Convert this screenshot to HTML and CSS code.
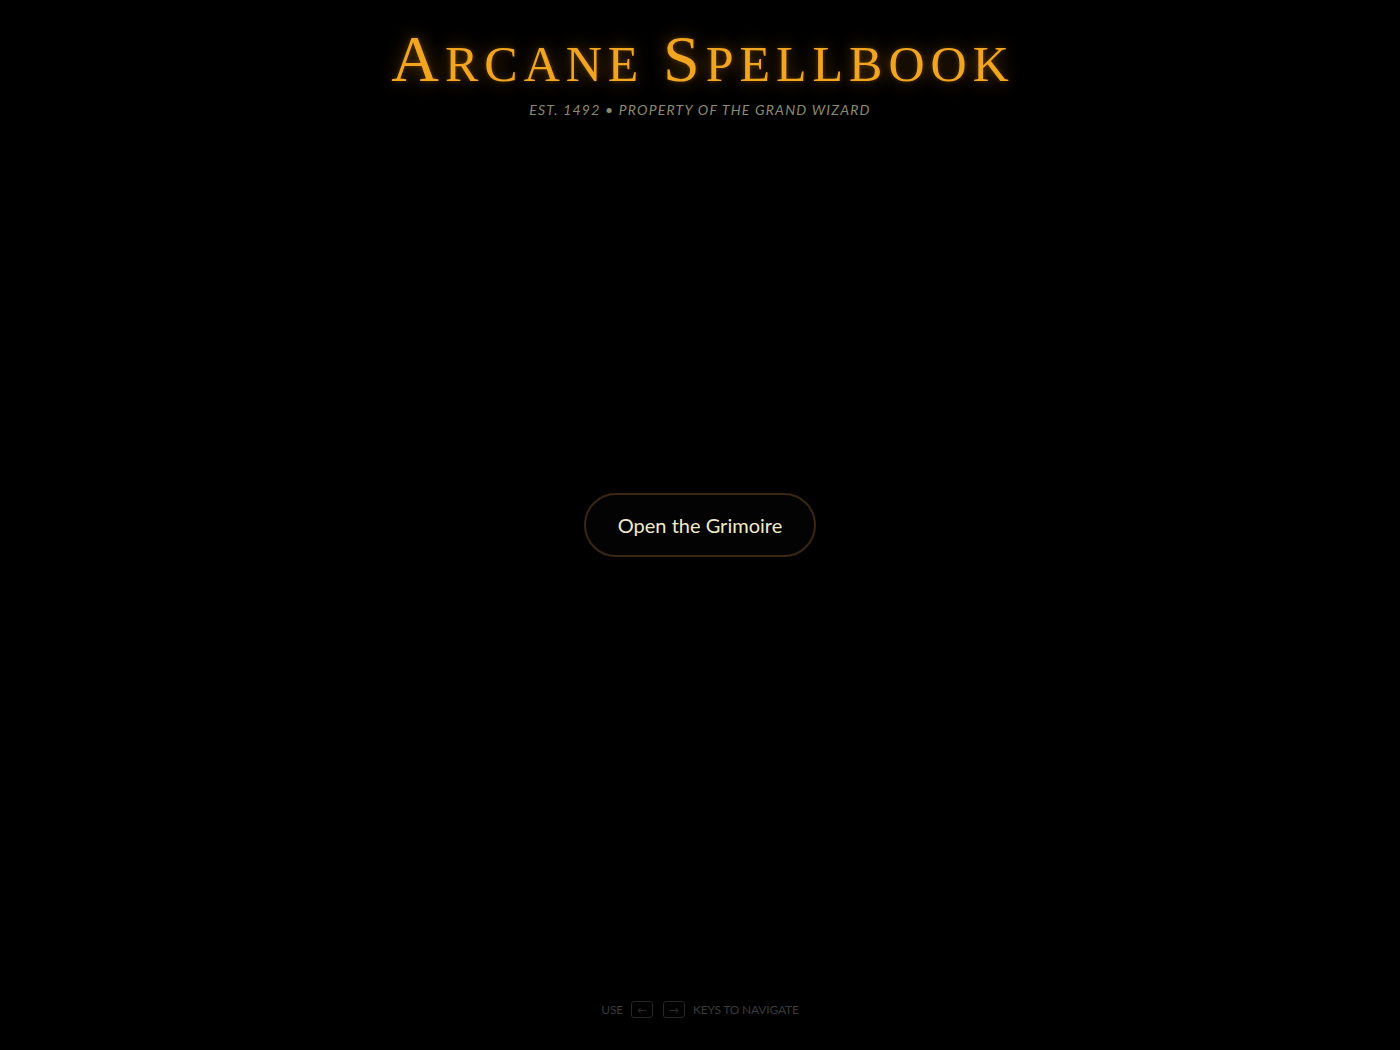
FILE: index.html
```html
<!DOCTYPE html>
<html lang="en">
<head>
<meta charset="utf-8">
<title>Arcane Spellbook</title>
<link rel="stylesheet" href="styles.css">
</head>
<body>
<div class="page">
  <header class="header">
    <h1 class="title"><span class="cap">A</span>rcane <span class="cap">S</span>pellbook</h1>
    <p class="subtitle">Est. 1492 &bull; Property of the Grand Wizard</p>
  </header>
  <main class="stage">
    <button class="open-btn" type="button">Open the Grimoire</button>
  </main>
  <footer class="hint">
    <span>Use</span>
    <span class="key">&larr;</span>
    <span class="key">&rarr;</span>
    <span>Keys to navigate</span>
  </footer>
</div>
</body>
</html>
```

FILE: styles.css
```css
html, body {
  margin: 0;
  padding: 0;
  background: #000;
  height: 100%;
}
body {
  font-family: Lato, "Open Sans", sans-serif;
  color: #e8e0c0;
}
.page {
  height: 1050px;
  display: grid;
  grid-template-rows: 1fr auto 1fr;
  justify-items: center;
}
.header {
  align-self: start;
  padding-top: 26px;
  text-align: center;
}
.title {
  margin: 0;
  font-family: "Liberation Serif", "DejaVu Serif", serif;
  font-weight: normal;
  text-transform: uppercase;
  font-size: 50px;
  line-height: 66px;
  height: 66px;
  letter-spacing: 6px;
  margin-right: -6px;
  color: #f2a51e;
  text-shadow: 0 0 18px rgba(245, 150, 20, 0.45), 0 0 4px rgba(245, 150, 20, 0.3);
}
.title .cap {
  font-size: 66px;
  line-height: 1;
}
.subtitle {
  margin: 9px 0 0;
  font-family: Lato, sans-serif;
  font-style: italic;
  font-size: 14px;
  letter-spacing: 1.2px;
  text-transform: uppercase;
  color: #8c8a6c;
}
.stage {
  display: flex;
  align-items: center;
  justify-content: center;
}
.open-btn {
  width: 232px;
  height: 64px;
  border-radius: 32px;
  border: 2px solid #3a2712;
  background: #040303;
  color: #f1ebc9;
  font-family: Lato, sans-serif;
  font-size: 20px;
  cursor: pointer;
}
.hint {
  align-self: end;
  display: flex;
  align-items: center;
  gap: 7px;
  padding-bottom: 32px;
  font-size: 12px;
  text-transform: uppercase;
  color: #3a3a3a;
  letter-spacing: -0.2px;
}
.key {
  display: inline-flex;
  align-items: center;
  justify-content: center;
  width: 20px;
  height: 15px;
  border: 1px solid #262626;
  border-radius: 3px;
  font-size: 10px;
  color: #333;
  margin: 0 1px;
}
.key + .key {
  margin-left: 2px;
}
```
